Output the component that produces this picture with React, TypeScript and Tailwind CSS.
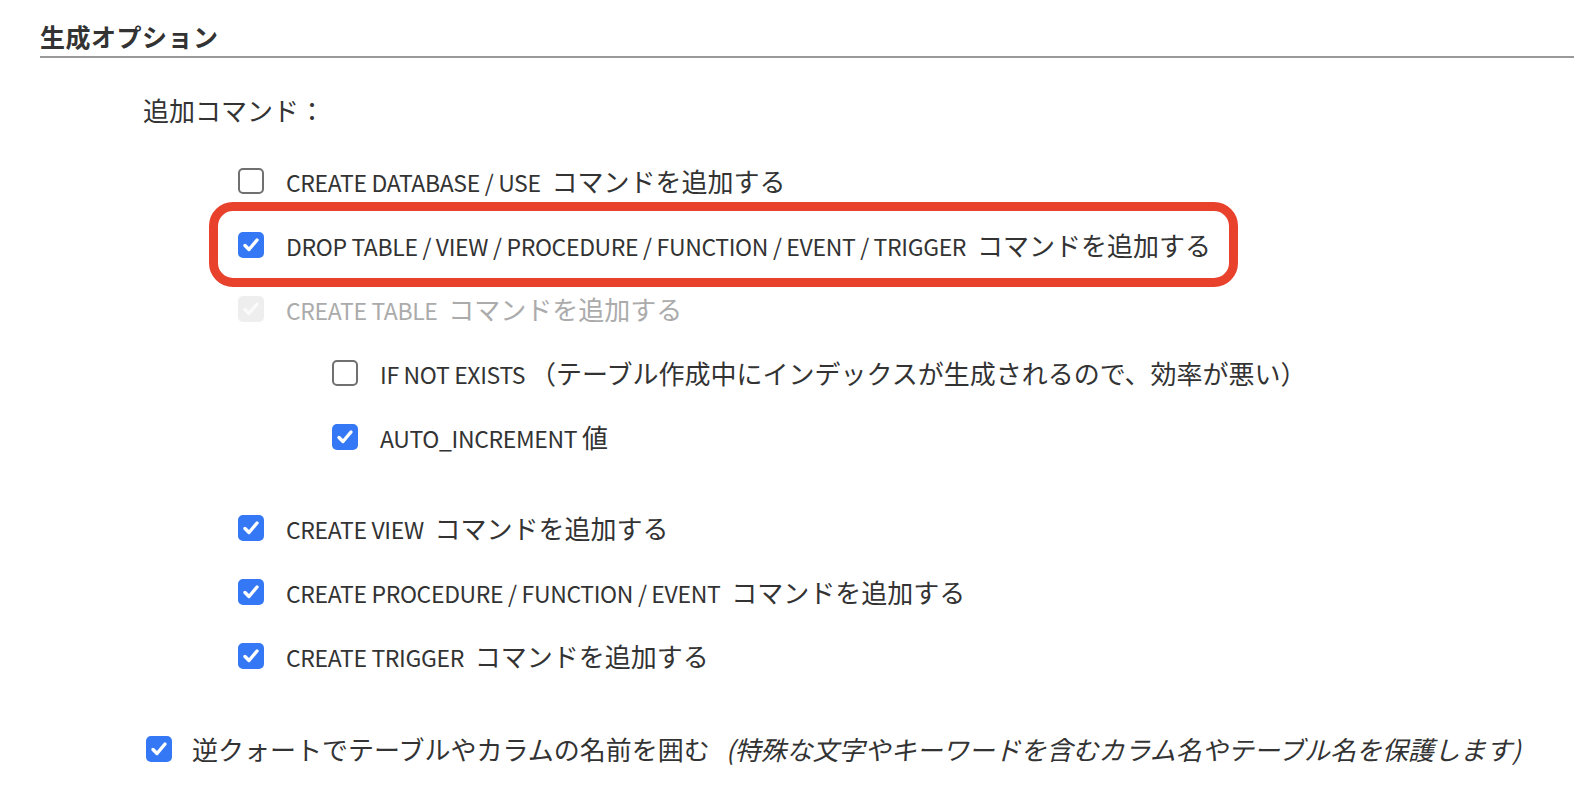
import React from 'react'

type BoxState = 'on' | 'off' | 'disabled'

function Box({ state }: { state: BoxState }) {
  if (state === 'off') {
    return <span className="block w-[26px] h-[26px] shrink-0 rounded-[5px] border-2 border-[#707070] bg-white" />
  }
  const bg = state === 'on' ? 'bg-[#3478f6]' : 'bg-[#eeeeee]'
  const stroke = state === 'on' ? '#ffffff' : '#fafafa'
  return (
    <span className={`flex w-[26px] h-[26px] shrink-0 items-center justify-center rounded-[5px] ${bg}`}>
      <svg width="20" height="20" viewBox="0 0 20 20" fill="none">
        <path d="M4 10.5 L8 14.5 L16 5" stroke={stroke} strokeWidth="3.4" strokeLinecap="round" strokeLinejoin="round" />
      </svg>
    </span>
  )
}

// Latin runs are narrower than the CJK ones in the source
function L({ children, tight }: { children: React.ReactNode; tight?: boolean }) {
  return (
    <span className={`text-[23px] tracking-[-0.35px] ${tight ? '' : 'pr-[6px]'}`}>{children}</span>
  )
}

function Row({ state, children, highlight }: { state: BoxState; children: React.ReactNode; highlight?: boolean }) {
  const textColor = state === 'disabled' ? 'text-[#ababab]' : 'text-[#333333]'
  return (
    <div className="h-16 flex items-center">
      <div className="relative flex items-center gap-[22px]">
        <Box state={state} />
        <span className={`whitespace-nowrap ${textColor}`}>{children}</span>
        {highlight && (
          <span className="absolute -left-[29px] -right-[27px] -top-[25px] -bottom-[23px] rounded-[24px] border-[9px] border-[#e8412c] pointer-events-none" />
        )}
      </div>
    </div>
  )
}

export default function App() {
  return (
    <div
      className="min-h-screen bg-white pl-[40px] pt-[16px] text-[26px] leading-[36px] text-[#333333]"
      style={{ fontFamily: '"Noto Sans CJK JP", "Noto Sans", sans-serif' }}
    >
      <h2 className="leading-[40px] text-[25px] font-bold border-b-2 border-[#9a9a9a] tracking-[0.5px]">生成オプション</h2>

      <div className="pl-[103px]">
        <div className="mt-[34px] leading-[36px]">追加コマンド：</div>

        <div className="mt-[21px] pl-[95px]">
          <Row state="off"><L>CREATE DATABASE / USE </L>コマンドを追加する</Row>
          <Row state="on" highlight>
            <L>DROP TABLE / VIEW / PROCEDURE / FUNCTION / EVENT / TRIGGER </L>コマンドを追加する
          </Row>
          <Row state="disabled"><L>CREATE TABLE </L>コマンドを追加する</Row>
          <div className="pl-[94px]">
            <Row state="off"><L tight>IF NOT EXISTS </L>（テーブル作成中にインデックスが生成されるので、効率が悪い）</Row>
            <Row state="on"><L tight>AUTO_INCREMENT </L>値</Row>
          </div>
          <div className="mt-[27px]">
            <Row state="on"><L>CREATE VIEW </L>コマンドを追加する</Row>
            <Row state="on"><L>CREATE PROCEDURE / FUNCTION / EVENT </L>コマンドを追加する</Row>
            <Row state="on"><L>CREATE TRIGGER </L>コマンドを追加する</Row>
          </div>
        </div>

        <div className="mt-[29px] pl-[3px]">
          <div className="h-16 flex items-center gap-[20px]">
            <Box state="on" />
            <span className="whitespace-nowrap">
              逆クォートでテーブルやカラムの名前を囲む
              <span className="italic ml-[16px]">(特殊な文字やキーワードを含むカラム名やテーブル名を保護します)</span>
            </span>
          </div>
        </div>
      </div>
    </div>
  )
}
